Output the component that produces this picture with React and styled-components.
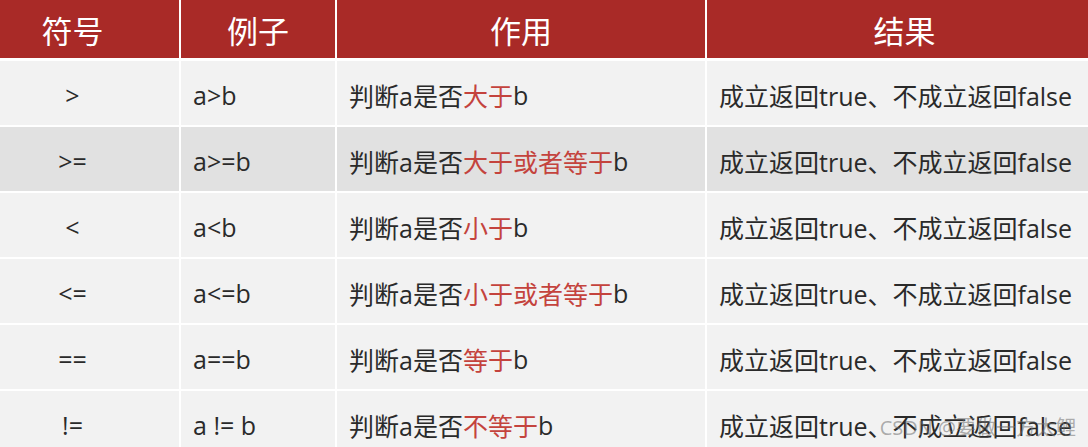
import styled, { createGlobalStyle } from "styled-components";

const GlobalStyle = createGlobalStyle`
  html, body {
    margin: 0;
    padding: 0;
    background: #fff;
  }
  body {
    width: 1088px;
    height: 447px;
    overflow: hidden;
    font-family: "Open Sans", "Noto Sans CJK SC", sans-serif;
  }
`

const Wrapper = styled.div`
  position: relative;
  width: 1088px;
  height: 447px;
  overflow: hidden;
  background: #fff;
`

const Table = styled.div`
  display: grid;
  grid-template-columns: 179px 154px 368px 1fr;
  grid-template-rows: 59px;
  grid-auto-rows: 64px;
  column-gap: 2px;
  row-gap: 2px;
  width: 1088px;
`

const HeadCell = styled.div`
  display: flex;
  align-items: center;
  justify-content: center;
  background: #a92a27;
  color: #fff;
  font-family: "Noto Sans CJK SC", sans-serif;
  font-size: 31px;
  margin-bottom: 1px;
  padding-right: ${(p) => p.$shiftLeft || 0}px;
  padding-left: ${(p) => p.$shiftRight || 0}px;
`

const Cell = styled.div`
  display: flex;
  align-items: center;
  justify-content: ${(p) => (p.$center ? "center" : "flex-start")};
  padding: 4px 0 0 ${(p) => (p.$center ? 0 : 12)}px;
  padding-right: ${(p) => p.$shiftLeft || 0}px;
  background: ${(p) => (p.$dark ? "#e1e1e1" : "#f2f2f2")};
  color: #2a2a2a;
  font-size: 25px;
  white-space: pre;
`

const Mark = styled.span`
  color: #c4433d;
`

const Watermark = styled.div`
  position: absolute;
  right: 12px;
  bottom: 6px;
  font-size: 20px;
  color: rgba(110, 110, 110, 0.55);
  white-space: nowrap;
`

const rows = [
  { sym: ">", ex: "a>b", mark: "大于" },
  { sym: ">=", ex: "a>=b", mark: "大于或者等于", dark: true },
  { sym: "<", ex: "a<b", mark: "小于" },
  { sym: "<=", ex: "a<=b", mark: "小于或者等于" },
  { sym: "==", ex: "a==b", mark: "等于" },
  { sym: "!=", ex: "a != b", mark: "不等于" },
]

export default function App() {
  return (
    <Wrapper>
      <GlobalStyle />
      <Table>
        <HeadCell $shiftLeft={34}>符号</HeadCell>
        <HeadCell>例子</HeadCell>
        <HeadCell>作用</HeadCell>
        <HeadCell $shiftRight={14}>结果</HeadCell>

        {rows.map((r, i) => (
          <>
            <Cell key={"s" + i} $center $shiftLeft={34} $dark={r.dark}>{r.sym}</Cell>
            <Cell key={"e" + i} $dark={r.dark}>{r.ex}</Cell>
            <Cell key={"d" + i} $dark={r.dark}>
              判断a是否<Mark>{r.mark}</Mark>b
            </Cell>
            <Cell key={"r" + i} $dark={r.dark}>成立返回true、不成立返回false</Cell>
          </>
        ))}
      </Table>
      <Watermark>CSDN @要做一方太鲤</Watermark>
    </Wrapper>
  );
}
